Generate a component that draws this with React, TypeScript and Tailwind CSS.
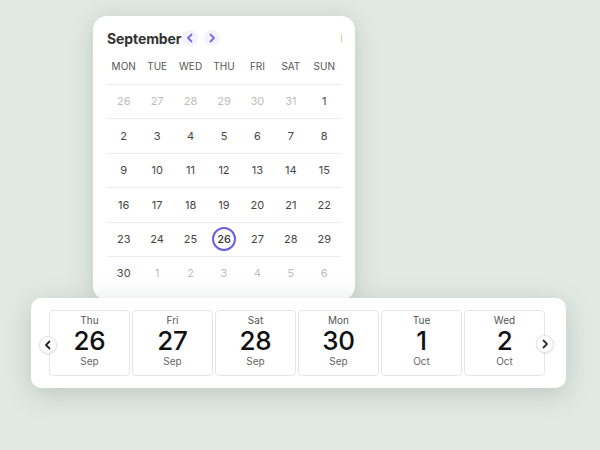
import React from "react";

const weeks: { d: number; muted: boolean }[][] = [
  [26, 27, 28, 29, 30, 31].map((d) => ({ d, muted: true })).concat([{ d: 1, muted: false }]),
  [2, 3, 4, 5, 6, 7, 8].map((d) => ({ d, muted: false })),
  [9, 10, 11, 12, 13, 14, 15].map((d) => ({ d, muted: false })),
  [16, 17, 18, 19, 20, 21, 22].map((d) => ({ d, muted: false })),
  [23, 24, 25, 26, 27, 28, 29].map((d) => ({ d, muted: false })),
  [{ d: 30, muted: false }].concat([1, 2, 3, 4, 5, 6].map((d) => ({ d, muted: true }))),
];

const days = ["MON", "TUE", "WED", "THU", "FRI", "SAT", "SUN"];

const strip = [
  { w: "Thu", d: "26", m: "Sep" },
  { w: "Fri", d: "27", m: "Sep" },
  { w: "Sat", d: "28", m: "Sep" },
  { w: "Mon", d: "30", m: "Sep" },
  { w: "Tue", d: "1", m: "Oct" },
  { w: "Wed", d: "2", m: "Oct" },
];

function Chevron({ dir, className }: { dir: "l" | "r"; className?: string }) {
  return (
    <svg width="8" height="10" viewBox="0 0 8 10" className={className} fill="none">
      <path
        d={dir === "l" ? "M5.5 1.5 L2 5 L5.5 8.5" : "M2.5 1.5 L6 5 L2.5 8.5"}
        stroke="currentColor"
        strokeWidth="1.8"
        strokeLinecap="round"
        strokeLinejoin="round"
      />
    </svg>
  );
}

export default function App() {
  return (
    <div
      className="w-[600px] h-[450px] bg-[#e1e9e4] overflow-hidden flex flex-col"
      style={{ fontFamily: "Inter, 'Noto Sans', sans-serif" }}
    >
      <div className="ml-[93px] mt-[16px] w-[262px] h-[284px] bg-white rounded-[14px] shadow-[0_4px_24px_rgba(60,80,70,0.2)] px-[14px] pt-[12px] relative">
        <div className="flex items-center h-[20px]">
          <span className="text-[14px] font-bold text-[#333] tracking-[-0.1px]">September</span>
          <span className="ml-[1px] w-[16px] h-[16px] rounded-full bg-[#f4f3fb] flex items-center justify-center text-[#7a6be0]">
            <Chevron dir="l" />
          </span>
          <span className="ml-[6px] w-[16px] h-[16px] rounded-full bg-[#f4f3fb] flex items-center justify-center text-[#7a6be0]">
            <Chevron dir="r" />
          </span>
          <span className="ml-auto mr-[-1px] w-[1px] h-[8px] bg-[#f2c48c]" />
        </div>
        <div className="grid grid-cols-7 h-[35px] items-center mt-[1px]">
          {days.map((d) => (
            <div key={d} className="text-center text-[10px] text-[#555]">
              {d}
            </div>
          ))}
        </div>
        {weeks.map((w, i) => (
          <div key={i} className="grid grid-cols-7 h-[34.4px] items-center border-t border-[#ececec]">
            {w.map((c, j) => {
              const sel = i === 4 && c.d === 26;
              return (
                <div key={j} className="flex justify-center">
                  {sel ? (
                    <span className="w-[24px] h-[24px] rounded-full border-[2px] border-[#6d5ee6] flex items-center justify-center text-[11px] text-[#333] font-medium">
                      {c.d}
                    </span>
                  ) : (
                    <span className={"text-[11px] " + (c.muted ? "text-[#bdbdbd]" : "text-[#474544]")}>{c.d}</span>
                  )}
                </div>
              );
            })}
          </div>
        ))}
      </div>
      <div className="ml-[31px] -mt-[2px] w-[535px] h-[90px] bg-white rounded-[10px] shadow-[0_6px_26px_rgba(60,80,70,0.22)] relative z-10 pl-[18px] pt-[12px]">
        <div className="relative flex gap-[2px]">
          {strip.map((s) => (
            <div
              key={s.d}
              className="w-[81px] h-[66px] border border-[#e6e6e6] rounded-[4px] flex flex-col items-center pt-[2px]"
            >
              <span className="text-[10px] leading-[14px] text-[#555]">{s.w}</span>
              <span className="text-[26px] leading-[28px] font-medium text-[#111] tracking-[-0.3px]">{s.d}</span>
              <span className="text-[10px] leading-[12px] text-[#666]">{s.m}</span>
            </div>
          ))}
          <span className="absolute left-[-10px] top-[26px] w-[18px] h-[18px] rounded-full bg-white border border-[#e2e2e2] shadow-[0_1px_2px_rgba(0,0,0,0.08)] flex items-center justify-center text-[#222]">
            <Chevron dir="l" />
          </span>
          <span className="absolute left-[487px] top-[25px] w-[18px] h-[18px] rounded-full bg-white border border-[#e2e2e2] shadow-[0_1px_2px_rgba(0,0,0,0.08)] flex items-center justify-center text-[#3a3020]">
            <Chevron dir="r" />
          </span>
        </div>
      </div>
    </div>
  );
}
